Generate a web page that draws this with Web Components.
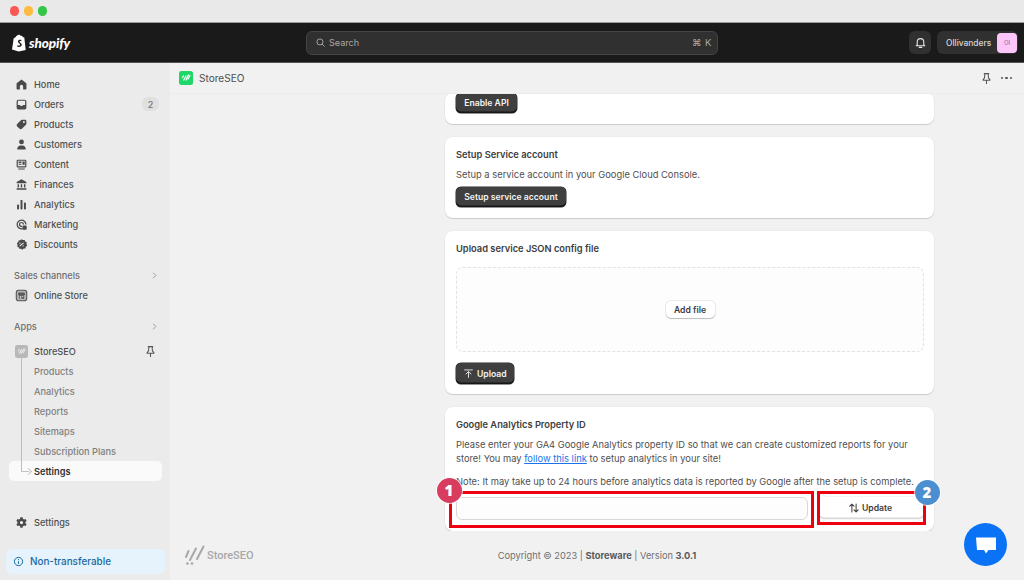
<!DOCTYPE html>
<html lang="en"><head><meta charset="utf-8"><title>StoreSEO settings</title>
<style>
html,body{margin:0;height:580px;overflow:hidden}
body{font-family:Inter,"Liberation Sans",sans-serif;font-size:9.35px;color:#4f4f4f;background:#f1f1f1}
</style></head><body>
<shop-frame>
  <mac-chrome></mac-chrome>
  <shop-topbar></shop-topbar>
  <div style="display:flex;height:517px">
    <nav-sidebar>
      <nav-item icon="home">Home</nav-item>
      <nav-item icon="orders" badge="2">Orders</nav-item>
      <nav-item icon="tag">Products</nav-item>
      <nav-item icon="person">Customers</nav-item>
      <nav-item icon="content">Content</nav-item>
      <nav-item icon="bank">Finances</nav-item>
      <nav-item icon="bars">Analytics</nav-item>
      <nav-item icon="target">Marketing</nav-item>
      <nav-item icon="discount">Discounts</nav-item>
      <nav-section>Sales channels</nav-section>
      <nav-item icon="store">Online Store</nav-item>
      <nav-section>Apps</nav-section>
      <nav-item icon="seo" pin style="margin-top:5px">StoreSEO</nav-item>
      <nav-sub>Products</nav-sub>
      <nav-sub>Analytics</nav-sub>
      <nav-sub>Reports</nav-sub>
      <nav-sub>Sitemaps</nav-sub>
      <nav-sub>Subscription Plans</nav-sub>
      <nav-sub active>Settings</nav-sub>
      <nav-item icon="gear" style="margin-top:31px">Settings</nav-item>
      <plan-banner>Non-transferable</plan-banner>
    </nav-sidebar>
    <app-main>
      <seo-card style="margin-top:-1px;padding-top:0">
        <ui-button dark>Enable API</ui-button>
      </seo-card>
      <seo-card heading="Setup Service account">
        <p style="margin:0 0 5px;line-height:14px">Setup a service account in your Google Cloud Console.</p>
        <ui-button dark>Setup service account</ui-button>
      </seo-card>
      <seo-card heading="Upload service JSON config file" gap="11" style="padding-bottom:10px">
        <drop-zone></drop-zone>
        <ui-button dark icon="upload" style="margin-top:11px">Upload</ui-button>
      </seo-card>
      <seo-card heading="Google Analytics Property ID">
        <p style="margin:0;line-height:14px">Please enter your GA4 Google Analytics property ID so that we can create customized reports for your store! You may <a href="#" style="color:#1a73e8">follow this link</a> to setup analytics in your site!</p>
        <p style="margin:9px 0 8px;line-height:14px;white-space:nowrap">Note: It may take up to 24 hours before analytics data is reported by Google after the setup is complete.</p>
        <property-row></property-row>
      </seo-card>
      <page-footer slot="footer"></page-footer>
    </app-main>
  </div>
  <step-mark n="1" c="#d83c5e" x="449" y="490"></step-mark>
  <step-mark n="2" c="#4b8fd1" x="927" y="492"></step-mark>
  <red-box x="449" y="491" w="365" h="37"></red-box>
  <red-box x="817" y="491" w="109" h="34"></red-box>
  <chat-fab></chat-fab>
</shop-frame>
<script>
const ICONS={
home:'<path d="M10 2.200 3 7.600a1.600 1.600 0 0 0-.6 1.300V16c0 1 .8 1.800 1.800 1.800H7.500V13a2.500 2.500 0 0 1 5 0v4.800h3.300c1 0 1.800-.8 1.800-1.800V8.900c0-.5-.2-1-.6-1.300z"/>',
orders:'<path fill-rule="evenodd" d="M5 2.500h10A2.500 2.500 0 0 1 17.500 5v10a2.500 2.500 0 0 1-2.500 2.500H5A2.500 2.500 0 0 1 2.500 15V5A2.500 2.500 0 0 1 5 2.500zm-.6 8.200h2.900c.5 0 .8.3 1 .7l.4.8h2.600l.4-.8c.2-.4.5-.7 1-.7h2.900V5c0-.3-.3-.6-.6-.6H5c-.3 0-.6.3-.6.6z"/>',
tag:'<path fill-rule="evenodd" d="M11 2.500h4.500c1.100 0 2 .9 2 2V9c0 .6-.2 1.100-.6 1.500l-6.200 6.200c-1 1-2.600 1-3.600 0l-3.800-3.800c-1-1-1-2.600 0-3.600L9.500 3.100c.4-.4 1-.6 1.500-.6zm2.700 5.300a1.500 1.500 0 1 0 0-3 1.500 1.500 0 0 0 0 3z"/>',
person:'<circle cx="10" cy="6" r="3.700"/><path d="M3.500 17.800v-1.300c0-3 2.400-5 5-5h3c2.600 0 5 2 5 5v1.300z"/>',
content:'<path fill-rule="evenodd" d="M4.500 2.500h11a2 2 0 0 1 2 2v8a2 2 0 0 1-2 2h-11a2 2 0 0 1-2-2v-8a2 2 0 0 1 2-2zm0 1.800c-.1 0-.2.1-.2.200v8c0 .1.1.2.2.2h11c.1 0 .2-.1.200-.2v-8c0-.1-.1-.2-.2-.2z"/><path d="M5.500 5.500h4.500v2H5.500zM11.500 5.500h3.500v5h-3.500zM5.500 9h4.500v1.500H5.500zM5 16h10v1.700H5z"/>',
bank:'<path d="M10 2 2.500 6v2h15V6zM4 9.500h2.200v5H4zM8.900 9.500h2.200v5H8.900zM13.800 9.500H16v5h-2.200zM2.500 15.700h15V18h-15z"/>',
bars:'<rect x="3.200" y="10" width="3" height="7.500" rx="1"/><rect x="8.500" y="3" width="3" height="14.500" rx="1"/><rect x="13.800" y="7" width="3" height="10.500" rx="1"/>',
target:'<path d="M10 2.300a7.700 7.700 0 1 0 2.200 15.100l-.8-1.900A5.700 5.700 0 1 1 15.700 10h2A7.700 7.700 0 0 0 10 2.300z"/><path d="M10 6a4 4 0 1 0 1.200 7.800l-.8-2a2 2 0 1 1 1.500-1.800h2.100A4 4 0 0 0 10 6z"/><rect x="11.500" y="11.500" width="6.500" height="6.500" rx="1.500"/>',
discount:'<path fill-rule="evenodd" d="M10 1.800l2.200 1.400 2.600-.2 1 2.400 2.400 1.400-.5 2.600 1 2.400-2 1.700-.7 2.500-2.600.2-2 1.700-2.200-1.400-2.600.2-1-2.400-2.200-1.400.5-2.600-1-2.400 2-1.700.7-2.500 2.600-.2zM7.500 6.900a1 1 0 1 0 0 2 1 1 0 0 0 0-2zm5 4.200a1 1 0 1 0 0 2 1 1 0 0 0 0-2zm.2-4.300-6 5.300 1 1.100 6-5.300z"/>',
store:'<rect x="2" y="2" width="16" height="16" rx="3.500" fill="#b4b4b4" stroke="#555" stroke-width="1.700"/><path d="M5.500 5.500h9l1 2.500c0 1-.7 1.700-1.500 1.700V15h-8V9.700C5.200 9.700 4.500 9 4.500 8z" fill="#5a5a5a"/><rect x="7.300" y="10.500" width="2.400" height="4.500" fill="#c8c8c8"/><rect x="10.700" y="10.500" width="2" height="2" fill="#c8c8c8"/>',
gear:'<path fill-rule="evenodd" d="M8.300 2h3.400l.5 2.300 1.700 1 2.300-.7 1.700 3-1.800 1.500v1.900l1.800 1.500-1.700 3-2.300-.7-1.700 1-.5 2.200H8.300l-.5-2.200-1.700-1-2.300.7-1.700-3 1.800-1.500V9.100L2.100 7.600l1.700-3 2.300.7 1.700-1zM10 7.500a2.500 2.500 0 1 0 0 5 2.500 2.500 0 0 0 0-5z"/>',
upload:'<path d="M3 3.500h14M10 17V7M5.500 11 10 6.500l4.500 4.500" fill="none" stroke="currentColor" stroke-width="1.600" stroke-linecap="round" stroke-linejoin="round"/>',
sort:'<path d="M6.500 16.500v-13M3 7l3.500-3.500L10 7M13.500 3.500v13M10 13l3.500 3.500L17 13" fill="none" stroke="currentColor" stroke-width="1.700" stroke-linecap="round" stroke-linejoin="round"/>',
pin:'<path d="M6.500 2.500h7M7.500 2.500 7 9l-2.200 2.700v1h10.400v-1L13 9l-.5-6.500M10 12.700v5" fill="none" stroke="currentColor" stroke-width="1.600" stroke-linecap="round" stroke-linejoin="round"/>',
bell:'<path d="M5 13.500V9a5 5 0 0 1 10 0v4.500l1.500 1.500h-13zM8 17.500h4" fill="none" stroke="currentColor" stroke-width="1.700" stroke-linecap="round" stroke-linejoin="round"/>',
search:'<circle cx="9" cy="9" r="5.500" fill="none" stroke="currentColor" stroke-width="1.700"/><path d="m13 13 4 4" stroke="currentColor" stroke-width="1.700" stroke-linecap="round"/>',
chev:'<path d="m7.500 4.500 5.500 5.500-5.500 5.500" fill="none" stroke="currentColor" stroke-width="1.800" stroke-linecap="round" stroke-linejoin="round"/>',
info:'<circle cx="10" cy="10" r="7.500" fill="none" stroke="currentColor" stroke-width="1.800"/><path d="M10 9.300v5" stroke="currentColor" stroke-width="1.800"/><circle cx="10" cy="6.400" r="1.100"/>'
};
const svg=(n,s)=>`<svg width="${s}" height="${s}" viewBox="0 0 20 20" fill="currentColor">${ICONS[n]}</svg>`;
const seoMark=(bg,fg,s=14)=>`<svg width="${s}" height="${s}" viewBox="0 0 14 14"><rect width="14" height="14" rx="2.500" fill="${bg}"/><path d="M3.500 6.500 4.500 5M4.800 9 7 5M7 9l2.500-5M9 8 11 4.500" stroke="${fg}" stroke-width="1.200" stroke-linecap="round" fill="none"/></svg>`;
function def(name,fn){customElements.define(name,class extends HTMLElement{
  connectedCallback(){ if(this.shadowRoot) return; const r=this.attachShadow({mode:'open'}); r.innerHTML=fn(this); }
});}
def('shop-frame',()=>`<style>:host{display:block;position:relative;width:1024px;height:580px;overflow:hidden}</style><slot></slot>`);
def('mac-chrome',()=>`<style>:host{display:flex;gap:4.500px;align-items:center;height:22px;padding:0 9.500px;background:#e9e9e9;border-bottom:1px solid #9c9c9c}
i{width:9.500px;height:9.500px;border-radius:50%}</style><i style="background:#fc5753"></i><i style="background:#fdbc40"></i><i style="background:#33c748"></i>`);
def('shop-topbar',()=>`<style>:host{display:flex;align-items:center;height:39px;background:#1a1a1a;color:#d8d8d8;padding:0 6px 0 11px;border-bottom:1px solid #555}
.logo{display:flex;align-items:center;gap:2px;width:295px;color:#fff}
.word{font:italic 900 13.500px Lato,"Open Sans",sans-serif;letter-spacing:-.1px}
.search{width:410px;height:22px;border:1px solid #444;border-radius:6px;background:#303030;display:flex;align-items:center;color:#a8a8a8;font-size:9.100px}
.search svg{margin:0 3px 0 8px}.search b{margin-left:auto;margin-right:5px;font-weight:400;font-size:9.500px;letter-spacing:.5px}
.right{margin-left:auto;display:flex;gap:6px;align-items:center}
.bell{width:22px;height:23px;border-radius:6px;background:#303030;display:grid;place-items:center;color:#e3e3e3}
.store{width:81px;height:23px;border-radius:6px;background:#303030;display:flex;align-items:center;box-sizing:border-box;padding:0 1px 0 9px;font-size:8.400px;font-weight:500;justify-content:space-between}
.av{width:20px;height:20px;border-radius:4px;background:#fdc6fa;color:#a7709f;font-size:6px;display:grid;place-items:center}
</style>
<div class="logo"><svg width="16" height="18" viewBox="0 0 16 18"><path d="M1 15.500 2.700 4.300C5 3.500 5.500 1 7.800.7c1-.1 1.700.6 2 1.400l1.200-.3 1 1.500 1.300.2 1.400 12.500-7 1.400z" fill="#fff"/><path d="M10.300 6.100c-.7-.3-2.800-.6-3.300 1.100-.4 1.800 2.500 2.200 2 3.800-.3.900-1.800.7-2.500.2l-.4 1.400c1.400.8 4.300.6 4.600-1.500.3-2.200-2.500-2.500-2.200-3.600.2-.8 1.200-.6 1.900-.3z" fill="#1a1a1a"/></svg><span class="word">shopify</span></div>
<div class="search">${svg('search',11)}<span>Search</span><b>⌘ K</b></div>
<div class="right"><div class="bell">${svg('bell',13)}</div><div class="store"><span>Ollivanders</span><span class="av">OI</span></div></div>`);
def('nav-sidebar',()=>`<style>:host{display:flex;flex-direction:column;width:170px;height:517px;box-sizing:border-box;padding-top:11px;background:#ebebeb;flex:none;position:relative}</style><slot></slot>`);
def('nav-item',h=>{const ic=h.getAttribute('icon'),b=h.getAttribute('badge');
 return `<style>:host{display:flex;align-items:center;height:20px;padding:0 11px 0 15px;color:#4f4f4f;font-size:9.200px;font-weight:500;flex:none;position:relative;z-index:1}
.i{width:13px;height:13px;margin-right:6px;color:#4a4a4a;display:grid;place-items:center}
.b{margin-left:auto;background:#e0e0e0;border-radius:6px;width:17px;height:14px;display:grid;place-items:center;font-size:9px;color:#777}
.p{margin-left:auto;margin-right:2px;color:#555;display:flex}</style>
<span class="i">${ic==='seo'?seoMark('#b8b8b8','#e8e8e8',13):svg(ic,13)}</span><slot></slot>
${b?`<span class="b">${b}</span>`:''}${h.hasAttribute('pin')?`<span class="p">${svg('pin',13)}</span>`:''}`});
def('nav-section',()=>`<style>:host{display:flex;align-items:center;justify-content:space-between;height:20px;margin-top:11px;padding:0 11px 0 14px;color:#6f6f6f;font-size:9.200px;font-weight:500;flex:none}
svg{color:#8a8a8a}</style><slot></slot>${svg('chev',9)}`);
def('nav-sub',h=>{const a=h.hasAttribute('active');return `<style>:host{display:flex;align-items:center;height:20px;flex:none;margin:0 8px 0 9px;padding-left:25px;border-radius:5px;font-size:9.200px;color:${a?'#303030':'#808080'};background:${a?'#fafafa':'transparent'};position:relative;font-weight:${a?600:500}}
.l{position:absolute;left:11.500px;top:-4px;width:1.500px;height:${a?'14px':'24px'};background:#bdbdbd}
.t{position:absolute;left:12px;top:9.500px;width:8px;height:1px;background:#c4c4c4}
.h{position:absolute;left:16.500px;top:7.500px;width:4px;height:4px;border:solid #c4c4c4;border-width:1px 1px 0 0;transform:rotate(45deg)}
</style><i class="l"></i>${a?'<i class="t"></i><i class="h"></i>':''}<slot></slot>`});
def('plan-banner',()=>`<style>:host{display:flex;align-items:center;gap:6px;height:25px;margin:16.500px 5px 0 6px;padding:0 0 0 7px;border-radius:6px;background:#e6f3fc;color:#19689f;font-size:9.900px;font-weight:500;flex:none}</style>${svg('info',11)}<slot></slot>`);
def('app-main',h=>`<style>:host{display:flex;flex-direction:column;flex:1;min-width:0;height:517px}
header{display:flex;align-items:center;height:30px;padding:0 12px 0 9px;background:#f1f1f1;border-bottom:1px solid #ececec;font-size:10.100px;color:#4f4f4f;flex:none;position:relative;z-index:1}
header span{margin-left:6px}header .r{margin-left:auto;display:flex;gap:8px;align-items:center;color:#555}
.dots{display:flex;gap:2px}.dots i{width:2.500px;height:2.500px;border-radius:50%;background:#555}
.scroll{height:437px;flex:none;overflow:hidden;padding-left:275px;padding-right:90px;display:flex;flex-direction:column;gap:13px}
</style><header>${seoMark('#1ed768','#fff')}<span>StoreSEO</span><div class="r">${svg('pin',13)}<div class="dots"><i></i><i></i><i></i></div></div></header>
<div class="scroll"><slot></slot></div><slot name="footer"></slot>`);
def('seo-card',h=>{const t=h.getAttribute('heading');return `<style>:host{display:block;flex:none;background:#fff;border-radius:8px;box-shadow:0 1px 1px rgba(0,0,0,.14),0 0 0 1px rgba(0,0,0,.02);padding:11px 10px 11px 11px;box-sizing:border-box;width:489px}
h3{margin:0 0 ${h.getAttribute('gap')||6}px;font:600 9.300px/14px Inter,sans-serif;color:#3d3d3d}</style>${t?`<h3>${t}</h3>`:''}<slot></slot>`});
def('ui-button',h=>{const ic=h.getAttribute('icon');return `<style>:host{display:table}
button{display:flex;align-items:center;justify-content:center;gap:3px;height:${ic?'21px':'20px'};padding:0 ${ic?'7px':'8.250px'};border:0;border-radius:5px;font:600 8.650px Inter,sans-serif;background:#3f3f3f;color:#f4f4f4;box-shadow:inset 0 -1.500px 0 #161616,0 0 0 .5px #2a2a2a}</style><button>${ic?svg(ic,11):''}<slot></slot></button>`});
def('drop-zone',()=>`<style>:host{display:flex;align-items:center;justify-content:center;height:85px;width:468px;box-sizing:border-box;border:1px dashed #e2e2e2;border-radius:7px;background:#fdfdfd}
button{height:17px;width:49px;padding:0;border:0;border-radius:5px;background:#fff;color:#3d3d3d;font:600 8.650px Inter,sans-serif;box-shadow:0 1px 1px rgba(0,0,0,.2),0 0 0 1px rgba(0,0,0,.07)}</style><button>Add file</button>`);
def('property-row',()=>`<style>:host{display:flex;gap:11px;width:468px}
input{width:352px;height:23px;box-sizing:border-box;border:1px solid #d8d8d8;border-radius:6px;background:#fdfdfd;margin:0;padding:0 8px}
button{width:105px;height:22px;display:flex;align-items:center;justify-content:center;gap:2px;padding:0 3px 0 0;border:0;border-radius:5px;background:#fff;color:#3d3d3d;font:600 8.650px Inter,sans-serif;box-shadow:inset 0 -1.500px 0 #d8d8d8,0 0 0 .5px #eee}</style><input aria-label="Google Analytics Property ID"><button>${svg('sort',12)}Update</button>`);
def('page-footer',()=>`<style>:host{display:grid;grid-template-columns:1fr auto 1fr;align-items:center;height:50px;padding:0 0 0 14px;color:#6f6f6f;font-size:9.250px;box-sizing:border-box}
.lg{display:flex;align-items:center;gap:2px;color:#a8a8a8;font:500 11px Roboto,sans-serif}
b{font-weight:700;color:#5a5a5a}.c{padding-right:14px}</style>
<div class="lg"><svg width="21" height="21" viewBox="0 0 21 21"><path d="M2 12 4.500 6M6 15 12 3.500M13 14 19.500 1.500" stroke="#a8a8a8" stroke-width="2" stroke-linecap="round" fill="none"/><circle cx="3.500" cy="18.500" r="1.300" fill="#a8a8a8"/><circle cx="8" cy="18.500" r="1.300" fill="#a8a8a8"/></svg><span>StoreSEO</span></div>
<div class="c">Copyright © 2023 | <b>Storeware</b> | Version <b>3.0.1</b></div><div></div>`);
def('red-box',h=>`<style>:host{position:absolute;left:${h.getAttribute('x')}px;top:${h.getAttribute('y')}px;width:${h.getAttribute('w')}px;height:${h.getAttribute('h')}px;box-sizing:border-box;border:3px solid #ee0010;pointer-events:none;z-index:3}</style>`);
def('step-mark',h=>`<style>:host{position:absolute;left:${h.getAttribute('x')-12.5}px;top:${h.getAttribute('y')-12.5}px;width:25px;height:25px;border-radius:50%;background:${h.getAttribute('c')};color:#fff;font:800 15px/25px "Open Sans",sans-serif;text-align:center;z-index:4;box-shadow:0 0 0 1px rgba(255,255,255,.7)}</style>${h.getAttribute('n')}`);
def('chat-fab',()=>`<style>:host{position:absolute;left:964px;top:523px;width:43px;height:43px;border-radius:50%;background:#0a72f5;display:grid;place-items:center;z-index:4}</style><svg width="22" height="20" viewBox="0 0 22 20"><path d="M1 2.500h20V15h-7.500L11 18.500 9 15H2z" fill="#fff"/></svg>`);
</script>
</body></html>
